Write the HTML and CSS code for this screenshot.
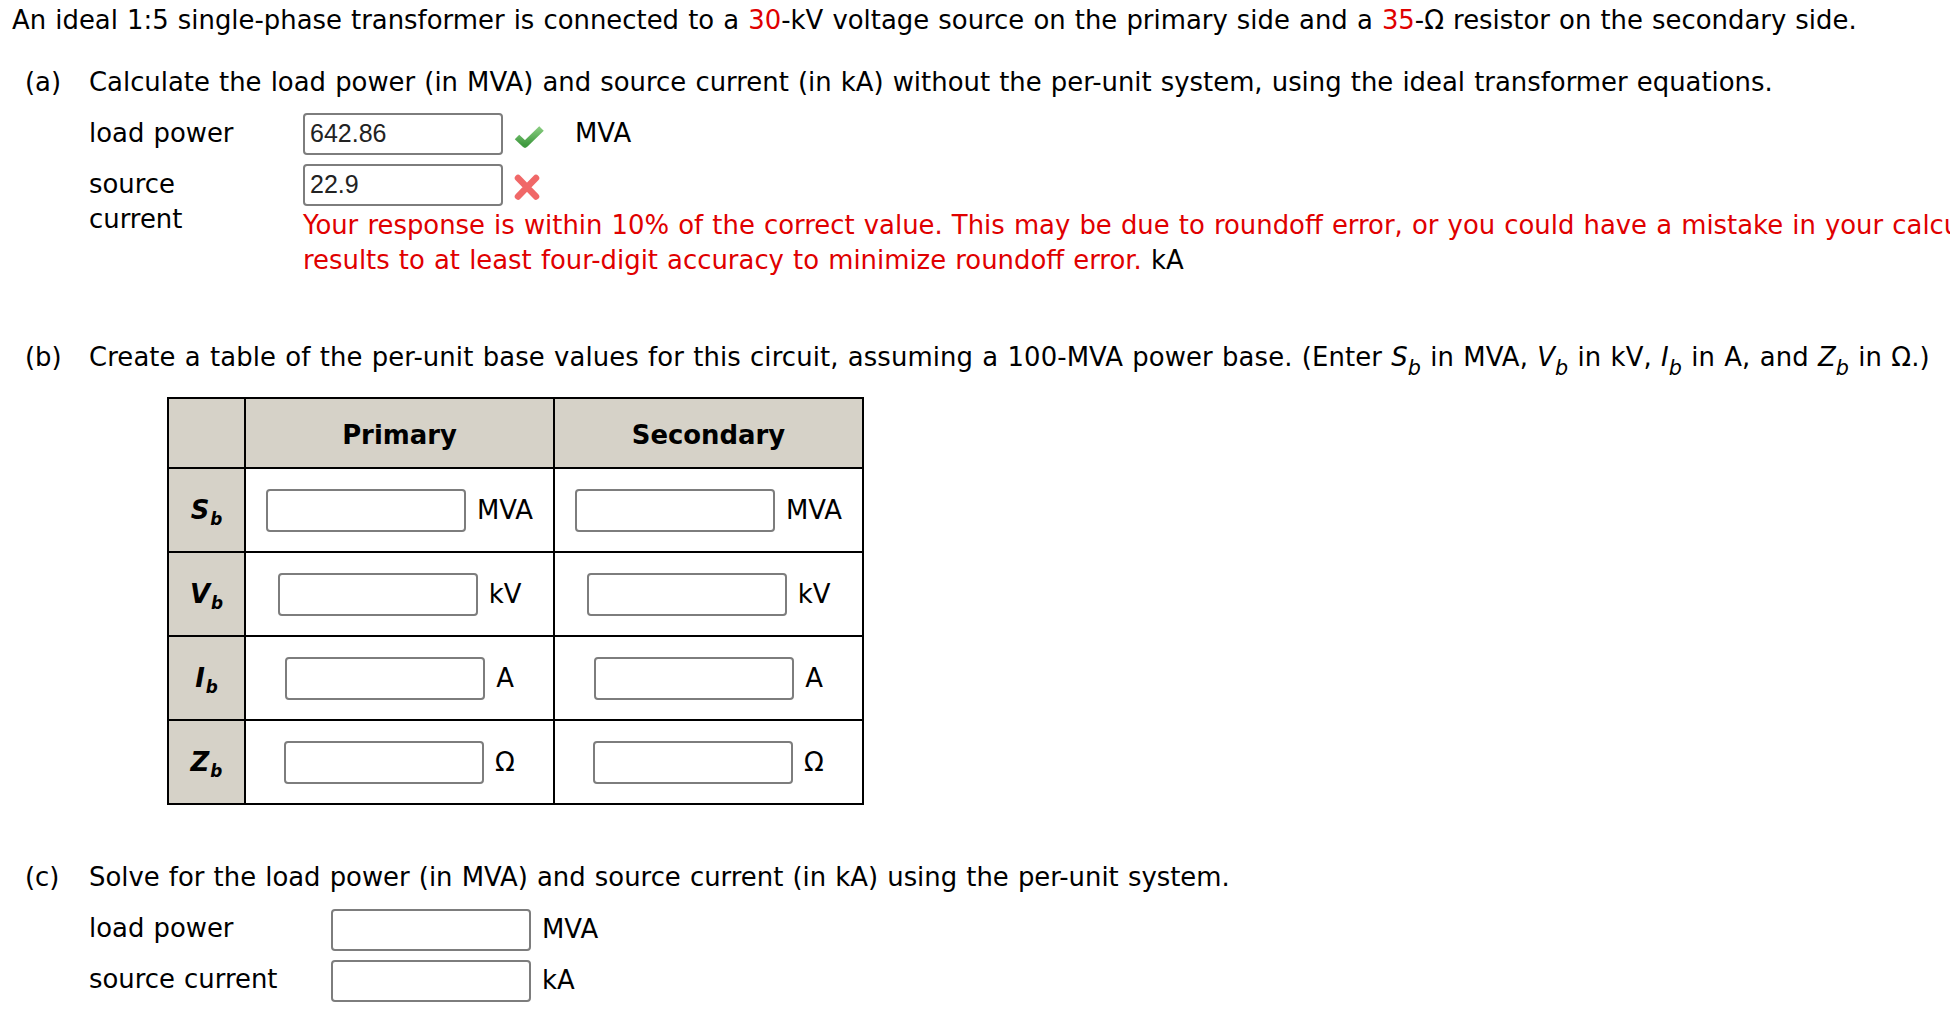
FILE: index.html
```html
<!DOCTYPE html>
<html>
<head>
  <meta charset="utf-8">
  <title>Per-unit transformer problem</title>
  <link rel="stylesheet" href="styles.css">
</head>
<body>

<p class="stem">An ideal 1:5 single-phase transformer is connected to a <span class="given">30</span>-kV voltage source on the primary side and a <span class="given">35</span>-&Omega; resistor on the secondary side.</p>

<!-- part (a): answered, one right and one within 10% -->
<div class="part part-a">
  <span class="part-label">(a)</span>
  <div class="part-body">
    <p class="prompt">Calculate the load power (in MVA) and source current (in kA) without the per-unit system, using the ideal transformer equations.</p>
    <div class="answers answers-a">
      <div class="ans-label">load power</div>
      <div class="field">
        <input type="text" value="642.86">
        <svg class="mark" viewBox="0 0 32 32" width="32" height="32">
          <defs>
            <linearGradient id="okGrad" x1="0" y1="0" x2="0" y2="1">
              <stop offset="0" stop-color="#84c97c"/>
              <stop offset="1" stop-color="#3f9a3f"/>
            </linearGradient>
          </defs>
          <path d="M4 19 L12 26.5 L28.5 10.5" fill="none" stroke="url(#okGrad)" stroke-width="6.5" stroke-linejoin="round"/>
        </svg>
        <span class="unit unit-after-mark">MVA</span>
      </div>

      <div class="ans-label">source current</div>
      <div>
        <div class="field">
          <input type="text" value="22.9">
          <svg class="mark" viewBox="0 0 32 32" width="32" height="32">
            <path d="M5 9 L23 27.5 M23 9 L5 27.5" fill="none" stroke="#ef5b5b" stroke-width="6.5" stroke-linecap="round" opacity="0.92"/>
          </svg>
        </div>
        <div class="feedback"><span class="wrong">Your response is within 10% of the correct value. This may be due to roundoff error, or you could have a mistake in your calculation. Carry out all intermediate<br>results to at least four-digit accuracy to minimize roundoff error.</span> kA</div>
      </div>
    </div>
  </div>
</div>

<!-- part (b): table of base values -->
<div class="part part-b">
  <span class="part-label">(b)</span>
  <div class="part-body">
    <p class="prompt">Create a table of the per-unit base values for this circuit, assuming a 100-MVA power base. (Enter <i>S<sub>b</sub></i> in MVA, <i>V<sub>b</sub></i> in kV, <i>I<sub>b</sub></i> in A, and <i>Z<sub>b</sub></i> in &Omega;.)</p>
    <table class="base-table">
      <thead>
        <tr>
          <th class="corner"></th>
          <th class="side">Primary</th>
          <th class="side">Secondary</th>
        </tr>
      </thead>
      <tbody>
        <tr>
          <th class="qty"><i>S<sub>b</sub></i></th>
          <td><div class="cell-field"><input type="text"><span class="unit">MVA</span></div></td>
          <td><div class="cell-field"><input type="text"><span class="unit">MVA</span></div></td>
        </tr>
        <tr>
          <th class="qty"><i>V<sub>b</sub></i></th>
          <td><div class="cell-field"><input type="text"><span class="unit">kV</span></div></td>
          <td><div class="cell-field"><input type="text"><span class="unit">kV</span></div></td>
        </tr>
        <tr>
          <th class="qty"><i>I<sub>b</sub></i></th>
          <td><div class="cell-field"><input type="text"><span class="unit">A</span></div></td>
          <td><div class="cell-field"><input type="text"><span class="unit">A</span></div></td>
        </tr>
        <tr>
          <th class="qty"><i>Z<sub>b</sub></i></th>
          <td><div class="cell-field"><input type="text"><span class="unit">&Omega;</span></div></td>
          <td><div class="cell-field"><input type="text"><span class="unit">&Omega;</span></div></td>
        </tr>
      </tbody>
    </table>
  </div>
</div>

<!-- part (c) -->
<div class="part part-c">
  <span class="part-label">(c)</span>
  <div class="part-body">
    <p class="prompt">Solve for the load power (in MVA) and source current (in kA) using the per-unit system.</p>
    <div class="answers answers-c">
      <div class="ans-label">load power</div>
      <div class="field"><input type="text"><span class="unit">MVA</span></div>
      <div class="ans-label">source current</div>
      <div class="field"><input type="text"><span class="unit">kA</span></div>
    </div>
  </div>
</div>

</body>
</html>
```

FILE: styles.css
```css
html, body {
  overflow-x: hidden;
}
body {
  font-family: "DejaVu Sans", Verdana, sans-serif;
  font-size: 25.9px;
  line-height: 35px;
  word-spacing: 0.9px;
  color: #000;
  margin: 0;
  padding: 2.7px 0 0 12px;
}
p {
  margin: 0;
}
sub {
  font-size: 0.8em;
  line-height: 0;
  vertical-align: -0.45em;
}
.stem {
  margin-bottom: 27px;
  white-space: nowrap;
}
.given,
.wrong {
  color: #e00000;
}

/* parts (a) (b) (c) */
.part {
  display: grid;
  grid-template-columns: 64px auto;
  margin-left: 13px;
}
.part-a {
  margin-bottom: 61.7px;
}
.part-b {
  margin-bottom: 54.7px;
}
.prompt {
  white-space: nowrap;
}
.part-b .prompt {
  letter-spacing: 0.1px;
}

/* answer rows */
.answers {
  display: grid;
  row-gap: 9px;
  align-items: start;
}
.answers-a {
  grid-template-columns: 214px auto;
  margin-top: 13.3px;
}
.answers-c {
  grid-template-columns: 242px auto;
  margin-top: 13.5px;
}
.ans-label {
  padding-top: 2.7px;
}
.answers-a .ans-label {
  padding-right: 40px;
}
.field {
  display: flex;
  align-items: center;
}
.field .unit {
  margin-left: 11px;
}
.mark {
  margin-left: 10px;
  flex: none;
}
.field .unit-after-mark {
  margin-left: 30px;
}
.feedback {
  margin-top: 2px;
  white-space: nowrap;
}

input {
  box-sizing: border-box;
  width: 200px;
  height: 42px;
  border: 2px solid #7d7d7d;
  border-radius: 4px;
  padding: 0 5px;
  font-family: "Liberation Sans", Arial, sans-serif;
  font-size: 25px;
  word-spacing: normal;
  color: #222;
  background: #fff;
  margin: 0;
}

/* base value table */
.base-table {
  border-collapse: collapse;
  border: 2px solid #000;
  margin: 22.7px 0 0 78px;
}
.base-table th,
.base-table td {
  border: 2px solid #000;
  padding: 0;
}
.base-table thead th {
  background: #d6d2c8;
  height: 64px;
  font-weight: bold;
  padding-top: 4px;
}
.base-table .corner {
  width: 75px;
}
.base-table .side {
  width: 307px;
}
.base-table td,
.base-table .qty {
  height: 82px;
}
.base-table .qty {
  background: #d6d2c8;
  font-weight: bold;
}
.base-table .qty sub {
  font-size: 0.65em;
  vertical-align: -6px;
  margin-left: 1px;
}
.cell-field {
  display: flex;
  justify-content: center;
  align-items: center;
  gap: 11px;
}
.cell-field input {
  height: 43px;
}
```
